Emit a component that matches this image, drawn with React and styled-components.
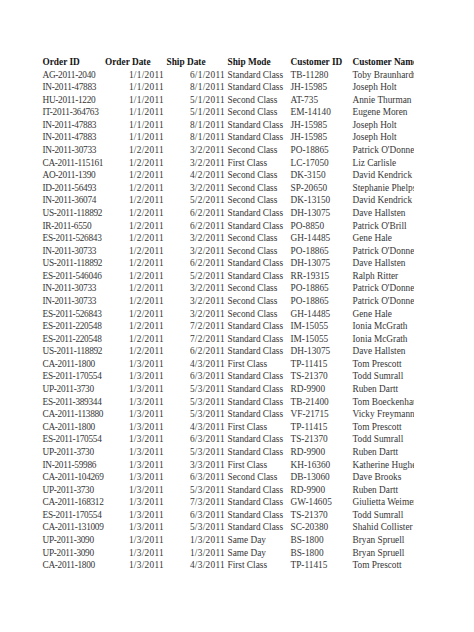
import styled, { createGlobalStyle } from "styled-components";

const GlobalStyle = createGlobalStyle`
  html, body {
    margin: 0;
    padding: 0;
    background: #ffffff;
  }
`;

const rows = [
  ["AG-2011-2040", "1/1/2011", "6/1/2011", "Standard Class", "TB-11280", "Toby Braunhardt"],
  ["IN-2011-47883", "1/1/2011", "8/1/2011", "Standard Class", "JH-15985", "Joseph Holt"],
  ["HU-2011-1220", "1/1/2011", "5/1/2011", "Second Class", "AT-735", "Annie Thurman"],
  ["IT-2011-364763", "1/1/2011", "5/1/2011", "Second Class", "EM-14140", "Eugene Moren"],
  ["IN-2011-47883", "1/1/2011", "8/1/2011", "Standard Class", "JH-15985", "Joseph Holt"],
  ["IN-2011-47883", "1/1/2011", "8/1/2011", "Standard Class", "JH-15985", "Joseph Holt"],
  ["IN-2011-30733", "1/2/2011", "3/2/2011", "Second Class", "PO-18865", "Patrick O'Donnell"],
  ["CA-2011-115161", "1/2/2011", "3/2/2011", "First Class", "LC-17050", "Liz Carlisle"],
  ["AO-2011-1390", "1/2/2011", "4/2/2011", "Second Class", "DK-3150", "David Kendrick"],
  ["ID-2011-56493", "1/2/2011", "3/2/2011", "Second Class", "SP-20650", "Stephanie Phelps"],
  ["IN-2011-36074", "1/2/2011", "5/2/2011", "Second Class", "DK-13150", "David Kendrick"],
  ["US-2011-118892", "1/2/2011", "6/2/2011", "Standard Class", "DH-13075", "Dave Hallsten"],
  ["IR-2011-6550", "1/2/2011", "6/2/2011", "Standard Class", "PO-8850", "Patrick O'Brill"],
  ["ES-2011-526843", "1/2/2011", "3/2/2011", "Second Class", "GH-14485", "Gene Hale"],
  ["IN-2011-30733", "1/2/2011", "3/2/2011", "Second Class", "PO-18865", "Patrick O'Donnell"],
  ["US-2011-118892", "1/2/2011", "6/2/2011", "Standard Class", "DH-13075", "Dave Hallsten"],
  ["ES-2011-546046", "1/2/2011", "5/2/2011", "Standard Class", "RR-19315", "Ralph Ritter"],
  ["IN-2011-30733", "1/2/2011", "3/2/2011", "Second Class", "PO-18865", "Patrick O'Donnell"],
  ["IN-2011-30733", "1/2/2011", "3/2/2011", "Second Class", "PO-18865", "Patrick O'Donnell"],
  ["ES-2011-526843", "1/2/2011", "3/2/2011", "Second Class", "GH-14485", "Gene Hale"],
  ["ES-2011-220548", "1/2/2011", "7/2/2011", "Standard Class", "IM-15055", "Ionia McGrath"],
  ["ES-2011-220548", "1/2/2011", "7/2/2011", "Standard Class", "IM-15055", "Ionia McGrath"],
  ["US-2011-118892", "1/2/2011", "6/2/2011", "Standard Class", "DH-13075", "Dave Hallsten"],
  ["CA-2011-1800", "1/3/2011", "4/3/2011", "First Class", "TP-11415", "Tom Prescott"],
  ["ES-2011-170554", "1/3/2011", "6/3/2011", "Standard Class", "TS-21370", "Todd Sumrall"],
  ["UP-2011-3730", "1/3/2011", "5/3/2011", "Standard Class", "RD-9900", "Ruben Dartt"],
  ["ES-2011-389344", "1/3/2011", "5/3/2011", "Standard Class", "TB-21400", "Tom Boeckenhauer"],
  ["CA-2011-113880", "1/3/2011", "5/3/2011", "Standard Class", "VF-21715", "Vicky Freymann"],
  ["CA-2011-1800", "1/3/2011", "4/3/2011", "First Class", "TP-11415", "Tom Prescott"],
  ["ES-2011-170554", "1/3/2011", "6/3/2011", "Standard Class", "TS-21370", "Todd Sumrall"],
  ["UP-2011-3730", "1/3/2011", "5/3/2011", "Standard Class", "RD-9900", "Ruben Dartt"],
  ["IN-2011-59986", "1/3/2011", "3/3/2011", "First Class", "KH-16360", "Katherine Hughes"],
  ["CA-2011-104269", "1/3/2011", "6/3/2011", "Second Class", "DB-13060", "Dave Brooks"],
  ["UP-2011-3730", "1/3/2011", "5/3/2011", "Standard Class", "RD-9900", "Ruben Dartt"],
  ["CA-2011-168312", "1/3/2011", "7/3/2011", "Standard Class", "GW-14605", "Giulietta Weimer"],
  ["ES-2011-170554", "1/3/2011", "6/3/2011", "Standard Class", "TS-21370", "Todd Sumrall"],
  ["CA-2011-131009", "1/3/2011", "5/3/2011", "Standard Class", "SC-20380", "Shahid Collister"],
  ["UP-2011-3090", "1/3/2011", "1/3/2011", "Same Day", "BS-1800", "Bryan Spruell"],
  ["UP-2011-3090", "1/3/2011", "1/3/2011", "Same Day", "BS-1800", "Bryan Spruell"],
  ["CA-2011-1800", "1/3/2011", "4/3/2011", "First Class", "TP-11415", "Tom Prescott"],
];

const headers = ["Order ID", "Order Date", "Ship Date", "Ship Mode", "Customer ID", "Customer Name"];

// per column: dates are right aligned like spreadsheet numbers
const columns = [
  { right: false, spacing: -0.3 },
  { right: true, spacing: 0.3 },
  { right: true, spacing: 0.3 },
  { right: false, spacing: 0 },
  { right: false, spacing: 0 },
  { right: false, spacing: 0 },
];

const Page = styled.div`
  padding: 56px 0 0 41px;
  font-family: "Liberation Serif", "DejaVu Serif", serif;
`;

const Sheet = styled.div`
  display: grid;
  grid-template-columns: 62.5px 61.5px 61px 63px 62px 63px;
  grid-auto-rows: 12.58px;
  width: 373px;
`;

const HeadCell = styled.div`
  font-size: 9.3px;
  font-weight: bold;
  color: #141414;
  line-height: 12.58px;
  padding-left: 1.5px;
  white-space: nowrap;
  overflow: hidden;
`;

const Cell = styled.div`
  font-size: 9.3px;
  color: #363636;
  line-height: 12.58px;
  white-space: nowrap;
  overflow: hidden;
  letter-spacing: ${(p) => p.$spacing}px;
  text-align: ${(p) => (p.$right ? "right" : "left")};
  padding: ${(p) => (p.$right ? "0 1px 0 0" : "0 0 0 1.5px")};
`;

export default function App() {
  return (
    <>
      <GlobalStyle />
      <Page>
        <Sheet>
          {headers.map((h) => (
            <HeadCell key={h}>{h}</HeadCell>
          ))}
          {rows.map((r, i) =>
            r.map((v, j) => (
              <Cell key={i + "-" + j} $right={columns[j].right} $spacing={columns[j].spacing}>
                {v}
              </Cell>
            ))
          )}
        </Sheet>
      </Page>
    </>
  );
}
